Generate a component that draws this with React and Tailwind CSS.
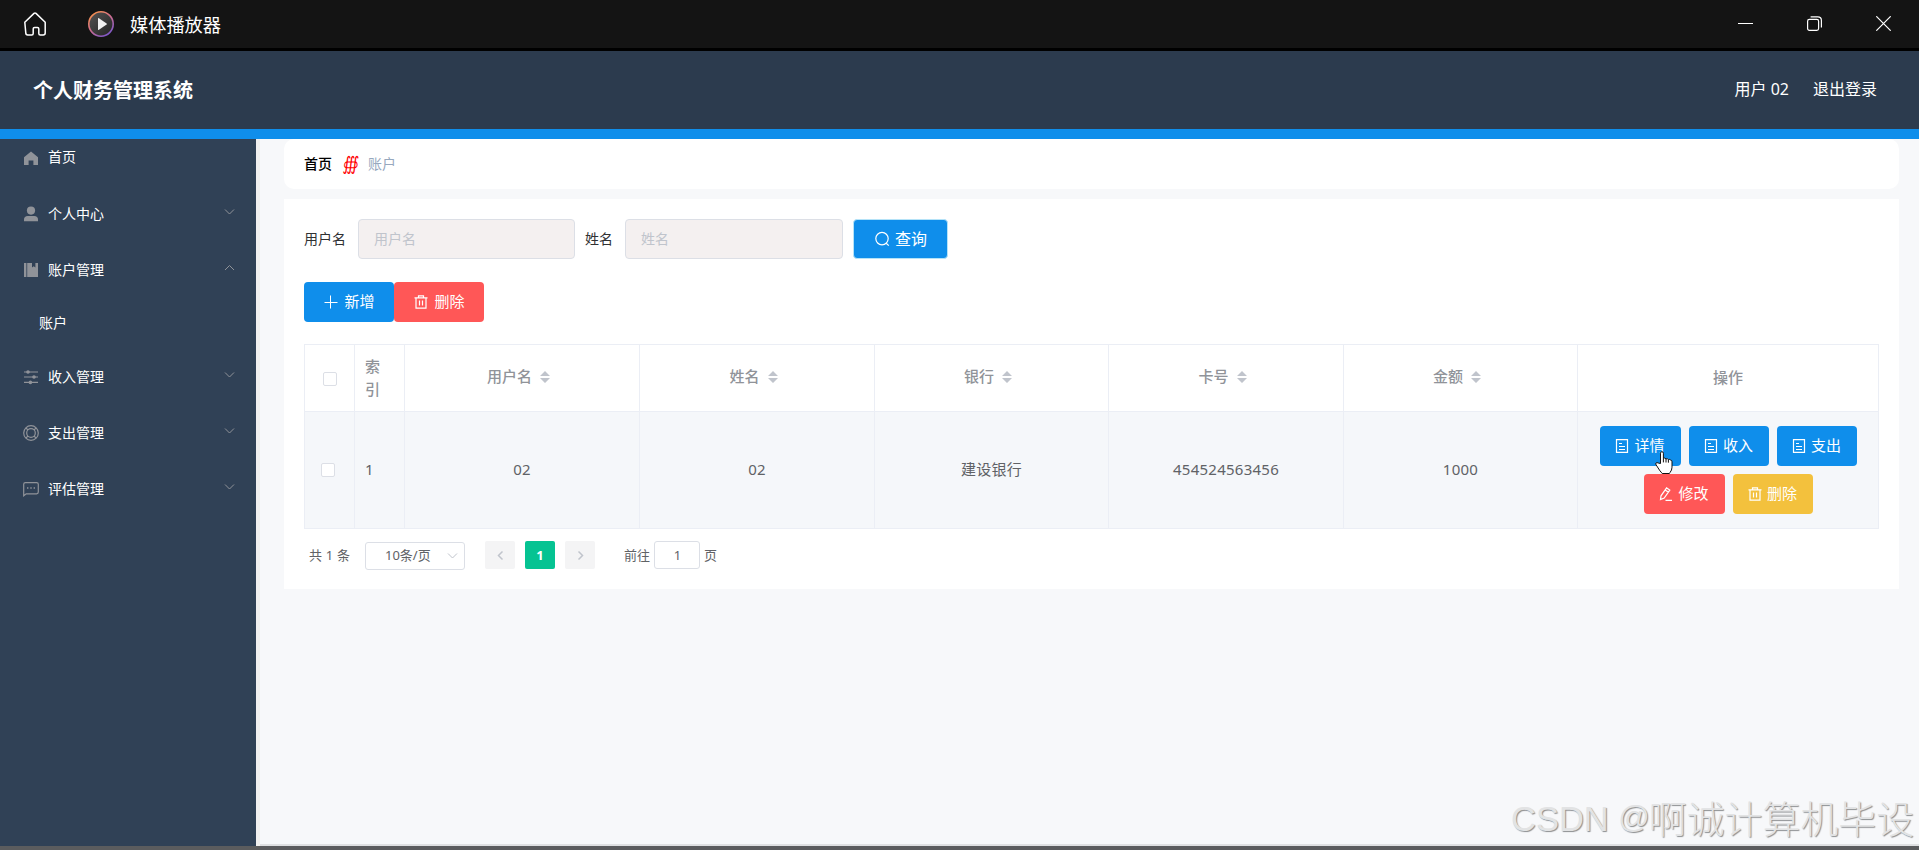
import React from 'react';

const menu = [
  { label: '首页', icon: 'home' },
  { label: '个人中心', icon: 'user', arrow: 'down' },
  { label: '账户管理', icon: 'book', arrow: 'up', children: ['账户'] },
  { label: '收入管理', icon: 'sliders', arrow: 'down' },
  { label: '支出管理', icon: 'ring', arrow: 'down' },
  { label: '评估管理', icon: 'chat', arrow: 'down' },
];

function MenuIcon({ name }) {
  const common = { viewBox: '0 0 16 16', className: 'h-4 w-4 shrink-0 text-[#909399]', fill: 'none', stroke: 'currentColor' };
  if (name === 'home')
    return <svg {...common} stroke="none"><path fill="currentColor" d="M8 1.5 15 7.2V15h-4.6v-4.4H5.6V15H1V7.2Z" /></svg>;
  if (name === 'user')
    return <svg {...common} stroke="none"><circle cx="8" cy="4.6" r="4.1" fill="currentColor" /><path fill="currentColor" d="M1 15.2v-1.6c0-2.2 1.5-3.6 3.6-3.6h6.8c2.1 0 3.6 1.4 3.6 3.6v1.6Z" /></svg>;
  if (name === 'book')
    return <svg {...common} stroke="none"><path fill="currentColor" d="M1 1h2.4v14H1ZM4.2 1H9v4.6l1.7-1.3 1.7 1.3V1H15v14H4.2Z" /></svg>;
  if (name === 'sliders')
    return <svg {...common} strokeWidth="1.2"><path d="M1 3h14M1 8h14M1 13.4h14" /><g fill="currentColor" stroke="none"><circle cx="5" cy="3" r="1.8" /><circle cx="11" cy="8" r="1.8" /><circle cx="7.4" cy="13.4" r="1.8" /></g></svg>;
  if (name === 'ring')
    return <svg {...common} strokeWidth="1.2"><circle cx="8" cy="8" r="7.3" /><circle cx="8" cy="8" r="4.3" /><path d="M2.8 2.8 5 5M13.2 2.8 11 5M2.8 13.2 5 11M13.2 13.2 11 11" /></svg>;
  return <svg {...common} strokeWidth="1.2"><path d="M.7 14.8V3.3Q.7 1.6 2.4 1.6h11.2q1.7 0 1.7 1.7v7.8q0 1.7-1.7 1.7H3.2Z" /><path strokeWidth="1.4" d="M4 7h1.4M7.3 7h1.4M10.6 7H12" /></svg>;
}

function Chevron({ dir = 'down', className = '' }) {
  const d = { down: 'M1 3.5 5.5 8 10 3.5', up: 'M1 8 5.5 3.5 10 8', left: 'M7.5 1.5 3.5 5.5l4 4', right: 'M3.5 1.5l4 4-4 4' }[dir];
  return <svg viewBox="0 0 11 11" className={'h-[11px] w-[11px] shrink-0 ' + className} fill="none" stroke="currentColor"><path d={d} /></svg>;
}

function DocIcon() {
  return <svg viewBox="0 0 14 14" className="h-3.5 w-3.5" fill="none" stroke="currentColor" strokeWidth="1.2"><path d="M1.5.7h11v12.6h-11ZM4 4.5h3M4 7.5h6M4 10.5h6" /></svg>;
}
function TrashIcon() {
  return <svg viewBox="0 0 14 14" className="h-3.5 w-3.5" fill="none" stroke="currentColor" strokeWidth="1.2"><path d="M.5 2.8h13M4.5 2.8V.8h5v2M2 2.8v10.4h10V2.8M5.5 5.5v5M8.5 5.5v5" /></svg>;
}
function EditIcon() {
  return <svg viewBox="0 0 14 14" className="h-3.5 w-3.5" fill="none" stroke="currentColor" strokeWidth="1.2"><path d="M1.5 12.5 2 8.8 7.6.9l3.2 2.2-5.6 7.9ZM6.2 2.9l3.2 2.3M6.5 13.3h6.5" /></svg>;
}
function PlusIcon() {
  return <svg viewBox="0 0 14 14" className="h-3.5 w-3.5" fill="none" stroke="currentColor"><path d="M6.5.5v13M.5 7.5h13" /></svg>;
}
function SearchIcon() {
  return <svg viewBox="0 0 16 16" className="h-4 w-4" fill="none" stroke="currentColor" strokeWidth="1.2"><circle cx="8" cy="7.6" r="6.2" /><path d="m12.2 12.2 2.6 2.4" /></svg>;
}

function ActionButton({ icon, children, className }) {
  return (
    <button className={'flex h-10 items-center justify-center gap-[5px] rounded text-[15px] text-white ' + className}>
      {icon}
      <span>{children}</span>
    </button>
  );
}

function SortHeader({ children }) {
  return (
    <div className="flex items-center justify-center border-r border-[#ebeef5] pr-[7px] pb-0.5">
      <span>{children}</span>
      <svg viewBox="0 0 10 12" className="ml-2 h-3 w-2.5" fill="#c0c4cc"><path d="M5 0 10 5H0ZM5 12 0 7h10Z" /></svg>
    </div>
  );
}

function Checkbox({ className = '' }) {
  return <span className={'h-3.5 w-3.5 rounded-[2px] border border-[#dcdfe6] bg-white ' + className} />;
}

const cols = 'grid grid-cols-[50px_50px_235px_235px_234px_235px_234px_301px]';

export default function App() {
  return (
    <div className="relative flex h-[850px] w-[1919px] flex-col overflow-hidden bg-[#f7f8fa] font-['Noto_Sans','Noto_Sans_CJK_SC',sans-serif] text-sm">
      <div className="flex h-[51px] shrink-0 items-center border-b-[3px] border-black bg-[#141414] text-white">
        <svg viewBox="0 0 24 24" className="ml-[23px] h-6 w-6" fill="none" stroke="currentColor" strokeWidth="1.5" strokeLinejoin="round"><path d="M1.8 10.2 11 1.4q1-.9 2 0l9.2 8.8v10.9q0 1.9-1.9 1.9h-3q-1.5 0-1.5-1.5v-4.7q0-1.4-1.4-1.4h-2.8q-1.4 0-1.4 1.4v4.7q0 1.5-1.5 1.5h-4q-1.9 0-1.9-1.9Z" /></svg>
        <svg viewBox="0 0 26 26" className="ml-[41px] h-[26px] w-[26px]">
          <defs>
            <linearGradient id="ringGradient" x1="0" y1="0" x2=".7" y2="1"><stop offset="0" stopColor="#ff9a3c" /><stop offset=".5" stopColor="#d4708a" /><stop offset="1" stopColor="#8058c8" /></linearGradient>
            <linearGradient id="discGradient" x1="0" y1="0" x2="1" y2="1"><stop offset="0" stopColor="#555" /><stop offset="1" stopColor="#222" /></linearGradient>
          </defs>
          <circle cx="13" cy="13" r="12.2" fill="url(#discGradient)" stroke="url(#ringGradient)" strokeWidth="1.6" />
          <path d="M10 7.4v11.2q0 .6.6.3l8-5.4q.6-.5 0-1l-8-5.4q-.6-.3-.6.3Z" fill="#f1f1f1" />
        </svg>
        <span className="mt-0.5 ml-4 text-[18.2px] leading-none">媒体播放器</span>
        <div className="mr-7 mb-px ml-auto flex items-center gap-[54px]">
          <svg viewBox="0 0 15 15" className="h-[15px] w-[15px]" stroke="currentColor"><path d="M0 7.5h15" /></svg>
          <svg viewBox="0 0 15 15" className="h-[15px] w-[15px]" fill="none" stroke="currentColor" strokeWidth="1.2"><rect x=".6" y="3.4" width="11" height="11" rx="1.8" /><path d="M3.6.8h7.2q3.6 0 3.6 3.6v7.2" /></svg>
          <svg viewBox="0 0 15 15" className="h-[15px] w-[15px]" stroke="currentColor" strokeWidth="1.2"><path d="m.3.3 14.4 14.4M14.7.3.3 14.7" /></svg>
        </div>
      </div>

      <header className="flex h-[88px] shrink-0 items-center border-b-[10px] border-[#0f8eeb] bg-[#2c3b4e] pr-[42px] pl-[33px] text-base text-white">
        <h1 className="pt-0.5 text-[20px] font-bold">个人财务管理系统</h1>
        <span className="mr-6 ml-auto pb-[3px]">用户 02</span>
        <span className="pb-[3px]">退出登录</span>
      </header>

      <div className="flex min-h-0 flex-1">
        <nav className="w-[260px] shrink-0 border-r-4 border-[#f0f0f0] bg-[#304156] text-white">
          {menu.map((item, i) => (
            <div key={item.label}>
              <div className={'flex items-center pr-[21px] pl-[23px] ' + (i === 0 ? 'h-[47px] pb-[9px]' : 'h-14')}>
                <MenuIcon name={item.icon} />
                <span className={'ml-[9px] ' + (i === 0 ? 'pb-0.5' : '')}>{item.label}</span>
                {item.arrow && <Chevron dir={item.arrow} className="mb-1.5 ml-auto text-[#909399]" />}
              </div>
              {item.children?.map((c) => (
                <div key={c} className="flex h-[51px] items-center pb-0.5 pl-[39px]">{c}</div>
              ))}
            </div>
          ))}
        </nav>

        <main className="flex min-w-0 flex-1 flex-col border-b-2 border-[#dfe0e2] pr-5 pl-6">
          <div className="flex h-[50px] shrink-0 items-center rounded-[10px] bg-white pl-5">
            <span className="font-medium text-black">首页</span>
            <span className="mr-2 ml-2.5 inline-block w-[18px] scale-y-125 -skew-x-6 text-center font-['DejaVu_Sans',sans-serif] text-[15px] leading-none text-[#f00] italic">∰</span>
            <span className="text-[#97a8be]">账户</span>
          </div>

          <section className="mt-2.5 h-[390px] shrink-0 bg-white px-5 pt-5">
            <div className="flex h-10 items-center text-[#303133]">
              <label className="w-[54px]">用户名</label>
              <div className="flex h-10 w-[217px] items-center rounded border border-[#dcdfe6] bg-[#f4f0f0] pl-[15px] text-[#c0c4cc]">用户名</div>
              <label className="ml-2.5 w-10">姓名</label>
              <div className="flex h-10 w-[218px] items-center rounded border border-[#dcdfe6] bg-[#f4f0f0] pl-[15px] text-[#c0c4cc]">姓名</div>
              <button className="ml-2.5 flex h-10 w-[95px] items-center justify-center gap-[5px] rounded border border-[#b5e3f8] bg-[#0f8eeb] text-base text-white">
                <SearchIcon />
                <span>查询</span>
              </button>
            </div>

            <div className="mt-[23px] flex">
              <button className="flex h-10 w-[90px] items-center justify-center gap-1.5 rounded bg-[#0f8eeb] pl-px text-[15px] text-white"><PlusIcon /><span>新增</span></button>
              <button className="flex h-10 w-[90px] items-center justify-center gap-1.5 rounded bg-[#ff5757] pl-px text-[15px] text-white"><TrashIcon /><span>删除</span></button>
            </div>

            <div className="mt-[22px] w-[1575px] border-t border-l border-[#ebeef5] text-[15px]">
              <div className={cols + ' h-[67px] border-b border-[#ebeef5] font-medium text-[#909399]'}>
                <div className="flex items-center justify-center border-r border-[#ebeef5] pt-0.5 pl-px"><Checkbox /></div>
                <div className="flex items-center border-r border-[#ebeef5] pb-px pl-2.5"><span className="w-[15px] leading-[23px]">索引</span></div>
                <SortHeader>用户名</SortHeader>
                <SortHeader>姓名</SortHeader>
                <SortHeader>银行</SortHeader>
                <SortHeader>卡号</SortHeader>
                <SortHeader>金额</SortHeader>
                <div className="flex items-center justify-center border-r border-[#ebeef5]">操作</div>
              </div>
              <div className={cols + ' h-[117px] border-b border-[#ebeef5] bg-[#f5f7fa] tracking-[.25px] text-[#606266]'}>
                <div className="flex items-center border-r border-[#ebeef5] pl-4"><Checkbox /></div>
                <div className="flex items-center border-r border-[#ebeef5] pl-2.5">1</div>
                {['02', '02', '建设银行', '454524563456', '1000'].map((v, i) => (
                  <div key={i} className="flex items-center justify-center border-r border-[#ebeef5]">{v}</div>
                ))}
                <div className="flex flex-col items-center justify-center gap-2 border-r border-[#ebeef5] tracking-normal">
                  <div className="flex gap-2">
                    <ActionButton icon={<DocIcon />} className="w-[81px] bg-[#0f8eeb]">详情</ActionButton>
                    <ActionButton icon={<DocIcon />} className="w-20 bg-[#0f8eeb]">收入</ActionButton>
                    <ActionButton icon={<DocIcon />} className="w-20 bg-[#0f8eeb]">支出</ActionButton>
                  </div>
                  <div className="flex gap-2">
                    <ActionButton icon={<EditIcon />} className="w-[81px] bg-[#ff5757]">修改</ActionButton>
                    <ActionButton icon={<TrashIcon />} className="w-20 bg-[#f3c13d]">删除</ActionButton>
                  </div>
                </div>
              </div>
            </div>

            <div className="flex h-[52px] items-center pl-[5px] text-[13px] text-[#606266]">
              <span className="w-14 tracking-[.2px]">共 1 条</span>
              <div className="mt-0.5 flex h-7 w-[100px] items-center rounded-[3px] border border-[#dcdfe6] pr-1.5 pb-px pl-[19px]">
                <span>10条/页</span>
                <Chevron className="ml-auto text-[#c0c4cc]" />
              </div>
              <div className="ml-5 flex gap-2.5">
                <div className="flex h-7 w-[30px] items-center justify-center rounded-[2px] bg-[#f4f4f5]"><Chevron dir="left" className="stroke-[1.5] text-[#c0c4cc]" /></div>
                <div className="flex h-7 w-[30px] items-center justify-center rounded-[2px] bg-[#05c392] font-bold text-white">1</div>
                <div className="flex h-7 w-[30px] items-center justify-center rounded-[2px] bg-[#f4f4f5]"><Chevron dir="right" className="stroke-[1.5] text-[#c0c4cc]" /></div>
              </div>
              <span className="ml-[29px]">前往</span>
              <div className="mr-1 ml-1 flex h-7 w-[46px] items-center justify-center rounded-[3px] border border-[#dcdfe6] pl-px">1</div>
              <span>页</span>
            </div>
          </section>
        </main>
      </div>

      <div className="h-1 shrink-0 bg-[#5b5c5e]" />

      <svg viewBox="0 0 18 24" className="absolute top-[451px] left-[1655px] h-6 w-[18px]" fill="#fff" stroke="#111" strokeWidth="1" strokeLinejoin="round">
        <path d="M5.5 12.5V2.2Q5.5.7 6.9.7t1.5 1.5v5.2q1.1-.9 2.6.5 1.3-.8 2.4.7 1.3-.6 2.3.5 1.3 0 1.3 1.7v5.4q0 3-2 5.3l-.6 1H7.2q-1-1.4-2.2-2.6L1.2 14q-1-1.2-.2-2 .9-.8 2.2 0Z" />
        <path fill="none" d="M8.4 7.4v4M11 8v3.5M13.4 8.7v3" />
      </svg>

      <div className="absolute top-[787px] left-[1511px] flex items-center leading-[56px] font-light whitespace-nowrap text-[#e2e3e4] [text-shadow:1px_1px_1px_#8c8e90]">
        <span className="pt-1 font-['Liberation_Sans',sans-serif] text-[34.5px] font-normal">CSDN&nbsp;</span>
        <span className="pt-0.5 font-['Liberation_Sans',sans-serif] text-[31px] font-normal">@</span>
        <span className="ml-[-1px] font-['Noto_Sans_CJK_SC',sans-serif] text-[37.9px]">啊诚计算机毕设</span>
      </div>
    </div>
  );
}
